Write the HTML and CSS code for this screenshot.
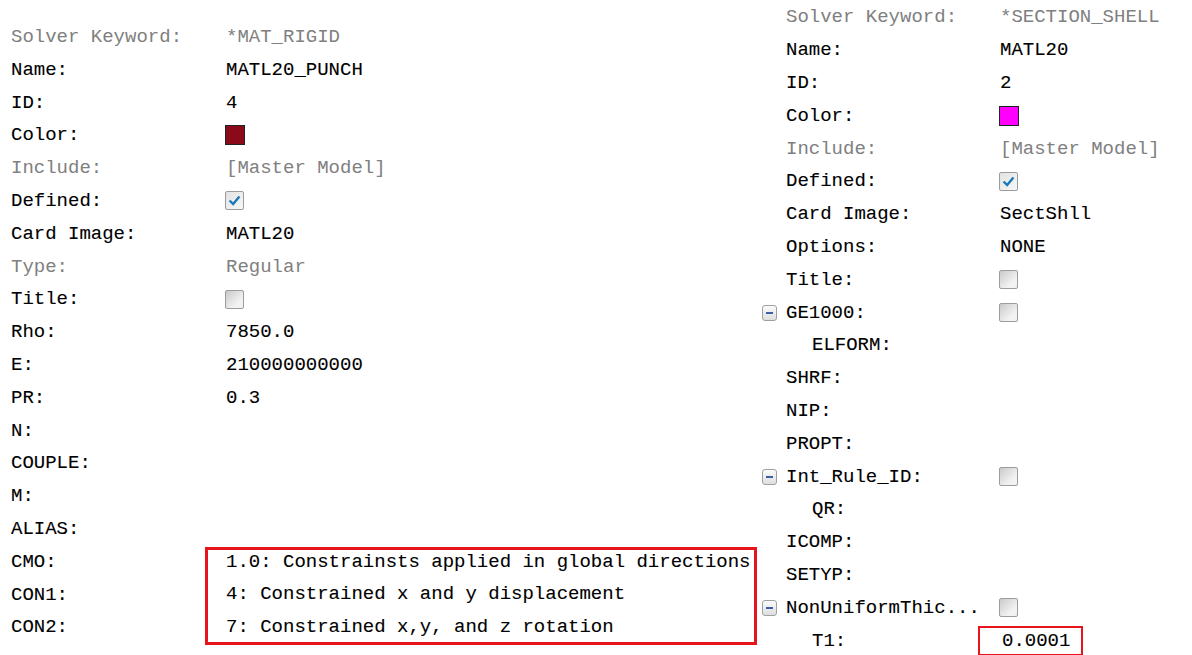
FILE: index.html
```html
<!DOCTYPE html>
<html lang="en">
<head>
    <meta charset="UTF-8">
    <meta name="viewport" content="width=device-width, initial-scale=1.0">
    <title>Keyword Properties</title>
    <link rel="stylesheet" href="styles.css">
</head>
<body>
    <div class="panel panel-left">
        <div class="row muted"><span class="label">Solver Keyword:</span><span class="value">*MAT_RIGID</span></div>
        <div class="row"><span class="label">Name:</span><span class="value">MATL20_PUNCH</span></div>
        <div class="row"><span class="label">ID:</span><span class="value">4</span></div>
        <div class="row"><span class="label">Color:</span><span class="value"><span class="swatch swatch-red"></span></span></div>
        <div class="row muted"><span class="label">Include:</span><span class="value">[Master Model]</span></div>
        <div class="row"><span class="label">Defined:</span><span class="value"><span class="check checked"><svg viewBox="0 0 19 19"><path d="M4 9.5 L8 13.5 L15 5" fill="none" stroke="#1a78b8" stroke-width="2.6"/></svg></span></span></div>
        <div class="row"><span class="label">Card Image:</span><span class="value">MATL20</span></div>
        <div class="row muted"><span class="label">Type:</span><span class="value">Regular</span></div>
        <div class="row"><span class="label">Title:</span><span class="value"><span class="check"></span></span></div>
        <div class="row"><span class="label">Rho:</span><span class="value">7850.0</span></div>
        <div class="row"><span class="label">E:</span><span class="value">210000000000</span></div>
        <div class="row"><span class="label">PR:</span><span class="value">0.3</span></div>
        <div class="row"><span class="label">N:</span></div>
        <div class="row"><span class="label">COUPLE:</span></div>
        <div class="row"><span class="label">M:</span></div>
        <div class="row"><span class="label">ALIAS:</span></div>
        <div class="group">
            <div class="group-labels">
                <div class="row"><span class="label">CMO:</span></div>
                <div class="row"><span class="label">CON1:</span></div>
                <div class="row"><span class="label">CON2:</span></div>
            </div>
            <div class="highlight">
                <div class="line">1.0: Constrainsts applied in global directions</div>
                <div class="line">4: Constrained x and y displacement</div>
                <div class="line">7: Constrained x,y, and z rotation</div>
            </div>
        </div>
    </div>

    <div class="panel panel-right">
        <div class="row muted"><span class="exp"></span><span class="label">Solver Keyword:</span><span class="value">*SECTION_SHELL</span></div>
        <div class="row"><span class="exp"></span><span class="label">Name:</span><span class="value">MATL20</span></div>
        <div class="row"><span class="exp"></span><span class="label">ID:</span><span class="value">2</span></div>
        <div class="row"><span class="exp"></span><span class="label">Color:</span><span class="value"><span class="swatch swatch-pink"></span></span></div>
        <div class="row muted"><span class="exp"></span><span class="label">Include:</span><span class="value">[Master Model]</span></div>
        <div class="row"><span class="exp"></span><span class="label">Defined:</span><span class="value"><span class="check checked"><svg viewBox="0 0 19 19"><path d="M4 9.5 L8 13.5 L15 5" fill="none" stroke="#1a78b8" stroke-width="2.6"/></svg></span></span></div>
        <div class="row"><span class="exp"></span><span class="label">Card Image:</span><span class="value">SectShll</span></div>
        <div class="row"><span class="exp"></span><span class="label">Options:</span><span class="value">NONE</span></div>
        <div class="row"><span class="exp"></span><span class="label">Title:</span><span class="value"><span class="check"></span></span></div>
        <div class="row"><span class="exp"><span class="toggle"></span></span><span class="label">GE1000:</span><span class="value"><span class="check"></span></span></div>
        <div class="row"><span class="exp"></span><span class="label indent">ELFORM:</span></div>
        <div class="row"><span class="exp"></span><span class="label">SHRF:</span></div>
        <div class="row"><span class="exp"></span><span class="label">NIP:</span></div>
        <div class="row"><span class="exp"></span><span class="label">PROPT:</span></div>
        <div class="row"><span class="exp"><span class="toggle"></span></span><span class="label">Int_Rule_ID:</span><span class="value"><span class="check"></span></span></div>
        <div class="row"><span class="exp"></span><span class="label indent">QR:</span></div>
        <div class="row"><span class="exp"></span><span class="label">ICOMP:</span></div>
        <div class="row"><span class="exp"></span><span class="label">SETYP:</span></div>
        <div class="row"><span class="exp"><span class="toggle"></span></span><span class="label">NonUniformThic...</span><span class="value"><span class="check"></span></span></div>
        <div class="row"><span class="exp"></span><span class="label indent">T1:</span><span class="value"><span class="field-box">0.0001</span></span></div>
    </div>
</body>
</html>
```

FILE: styles.css
```css
html, body {
    margin: 0;
    height: 100%;
    overflow: hidden;
}
body {
    font-family: "Liberation Mono", "DejaVu Sans Mono", monospace;
    font-size: 19px;
    color: #000;
    -webkit-text-stroke: 0.1px currentColor;
    background-color: white;
    display: flex;
    align-items: flex-start;
}
.panel {
    display: flex;
    flex-direction: column;
}
.panel-left {
    width: 760px;
    padding-top: 20.6px;
}
.panel-right {
    flex: 1;
    padding-top: 1px;
}
.row {
    display: flex;
    align-items: center;
    height: 32.8px;
    white-space: nowrap;
}
.muted {
    color: #808080;
    -webkit-text-stroke: 0;
}
.panel-left .label {
    width: 226px;
    padding-left: 11px;
    box-sizing: border-box;
}
.panel-right .label {
    width: 214px;
}
.panel-right .label.indent {
    padding-left: 26px;
    box-sizing: border-box;
}
.exp {
    width: 26px;
    display: flex;
    align-items: center;
}
.toggle {
    position: relative;
    width: 15px;
    height: 16px;
    margin-left: 2px;
    box-sizing: border-box;
    border: 1px solid #a0a0a0;
    border-radius: 3px;
    background: linear-gradient(#fbfbfb, #dedede);
}
.toggle::after {
    content: "";
    position: absolute;
    left: 3px;
    top: 6px;
    width: 7px;
    height: 2px;
    background-color: #3b5ea6;
}
.value {
    display: flex;
    align-items: center;
}
.swatch {
    display: inline-block;
    width: 20px;
    height: 20px;
    box-sizing: border-box;
    border: 1px solid #222;
    margin-left: -1px;
}
.swatch-red {
    background-color: #8b0a19;
}
.swatch-pink {
    background-color: #ff00ff;
}
.check {
    display: inline-block;
    width: 19px;
    height: 19px;
    box-sizing: border-box;
    border: 1px solid #9c9c9c;
    border-radius: 2px;
    margin-left: -1px;
    background: linear-gradient(135deg, #c9c9c9, #f2f2f2 70%);
}
.check.checked {
    background: linear-gradient(135deg, #e2e2e2, #f8f8f8);
}
.check svg {
    display: block;
    width: 17px;
    height: 17px;
}
.group {
    display: flex;
}
.highlight {
    width: 552px;
    height: 98px;
    box-sizing: border-box;
    margin: 1.6px 0 0 -21px;
    padding-left: 18px;
    border: 3px solid #e8141b;
    white-space: nowrap;
}
.highlight .line {
    height: 32.8px;
    line-height: 32.8px;
}
.highlight .line:first-child {
    margin-top: -4.4px;
}
.field-box {
    display: inline-block;
    width: 105px;
    height: 30px;
    line-height: 26px;
    box-sizing: border-box;
    margin-left: -22px;
    padding-left: 22px;
    border: 2px solid #e8141b;
}
```
